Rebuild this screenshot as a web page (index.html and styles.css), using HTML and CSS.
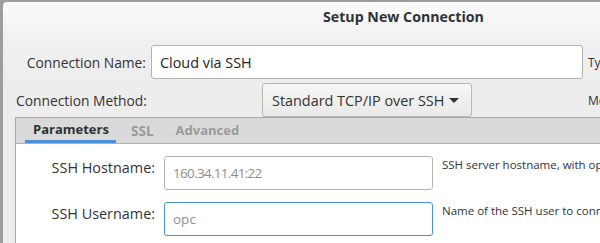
FILE: index.html
```html
<!DOCTYPE html>
<html>
<head>
<meta charset="utf-8">
<link rel="stylesheet" href="styles.css">
</head>
<body>
<div class="dialog">
  <div class="title">Setup New Connection</div>
  <div class="row1">
    <label class="lbl-name">Connection Name:</label>
    <div class="input name-input">Cloud via SSH</div>
    <span class="side">Ty</span>
  </div>
  <div class="row2">
    <label class="lbl-method">Connection Method:</label>
    <div class="combo">Standard TCP/IP over SSH <span class="arrow"></span></div>
    <span class="side side2">Me</span>
  </div>
  <div class="panel">
    <div class="tabs">
      <span class="tab active">Parameters</span>
      <span class="tab tab-ssl">SSL</span>
      <span class="tab tab-adv">Advanced</span>
    </div>
    <div class="content">
      <div class="frow">
        <label class="flbl">SSH Hostname:</label>
        <div class="input finput muted digits">160.34.11.41:22</div>
        <span class="help">SSH server hostname, with  optional port</span>
      </div>
      <div class="frow">
        <label class="flbl">SSH Username:</label>
        <div class="input finput focused muted">opc</div>
        <span class="help">Name of the SSH user to connect with</span>
      </div>
    </div>
  </div>
</div>
</body>
</html>
```
FILE: styles.css
```css
html, body {
  margin: 0;
  padding: 0;
  width: 600px;
  height: 243px;
  overflow: hidden;
  background: #9d9d9d;
}
body {
  font-family: "Open Sans", "DejaVu Sans", sans-serif;
  color: #2e3436;
}
.dialog {
  margin-left: 3px;
  margin-top: 2px;
  width: 720px;
  height: 260px;
  background: linear-gradient(#fbfbfb 0px, #f0f0f0 40px, #ededed 80px);
  border-top-left-radius: 4px;
}
.title {
  height: 30px;
  line-height: 30px;
  padding-left: 320px;
  font-weight: bold;
  font-size: 14.2px;
  color: #2e3436;
}
.row1, .row2 {
  display: flex;
  align-items: center;
  height: 34px;
}
.row1 { margin-top: 13px; }
.row2 { margin-top: 4px; }
.lbl-name {
  width: 143px;
  text-align: right;
  font-size: 13.8px;
  color: #333;
}
.input {
  box-sizing: border-box;
  height: 34px;
  background: #fff;
  border: 1px solid #b4b4b0;
  border-radius: 3px;
  display: flex;
  align-items: center;
}
.name-input {
  margin-left: 5px;
  width: 432px;
  padding-left: 8px;
  font-size: 14.4px;
  color: #222;
}
.side {
  margin-left: 5px;
  font-size: 12px;
  color: #2e3436;
}
.lbl-method {
  padding-left: 13px;
  width: 246px;
  font-size: 13.8px;
  color: #333;
}
.combo {
  box-sizing: border-box;
  width: 210px;
  height: 34px;
  border: 1px solid #b8b8b6;
  border-radius: 3px;
  background: linear-gradient(#f6f6f5, #e9e9e8);
  display: flex;
  align-items: center;
  padding-left: 9px;
  font-size: 14.4px;
  color: #333;
}
.arrow {
  display: inline-block;
  margin-left: 5px;
  width: 0;
  height: 0;
  border-left: 5px solid transparent;
  border-right: 5px solid transparent;
  border-top: 5px solid #2e3436;
}
.side2 { margin-left: 116px; }
.panel {
  margin-left: 12px;
  border: 1px solid #a9a9a9;
  border-right: none;
  background: #fff;
  height: 200px;
}
.tabs {
  height: 25px;
  background: #dadada;
  border-bottom: 1px solid #b0b0b0;
  display: flex;
  padding-left: 9px;
}
.tab {
  box-sizing: border-box;
  height: 25px;
  line-height: 25px;
  font-weight: bold;
  font-size: 13px;
  color: #9a9a9a;
}
.tab.active {
  color: #2e3436;
  padding: 0 7px 0 8px;
  border-bottom: 3px solid #4a90d9;
  line-height: 23px;
}
.tab-ssl { margin-left: 15px; font-size: 13.6px; }
.tab-adv { margin-left: 22px; }
.content {
  padding-top: 12px;
  display: flex;
  flex-direction: column;
  gap: 12px;
}
.frow {
  display: flex;
  align-items: center;
  height: 34px;
}
.flbl {
  width: 139px;
  text-align: right;
  font-size: 14.4px;
  color: #333;
  align-self: flex-start;
  padding-top: 2px;
}
.finput {
  margin-left: 9px;
  width: 269px;
  padding-left: 8px;
  font-size: 13.5px;
}
.digits { letter-spacing: -0.7px; }
.muted { color: #8e8e8e; }
.focused { border-color: #4a90d9; }
.help {
  margin-left: 9px;
  font-size: 11.5px;
  color: #2e3436;
  white-space: nowrap;
  align-self: flex-start;
  padding-top: 1px;
}
```
